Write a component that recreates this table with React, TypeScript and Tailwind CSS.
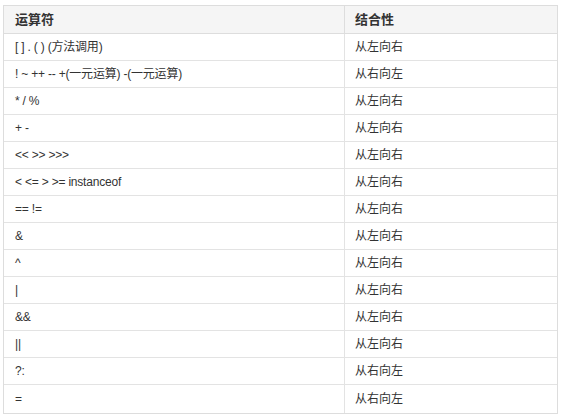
import React from "react";

const rows: [string, string][] = [
  ["[ ] . ( ) (方法调用)", "从左向右"],
  ["! ~ ++ -- +(一元运算) -(一元运算)", "从右向左"],
  ["* / %", "从左向右"],
  ["+ -", "从左向右"],
  ["<< >> >>>", "从左向右"],
  ["< <= > >= instanceof", "从左向右"],
  ["== !=", "从左向右"],
  ["&", "从左向右"],
  ["^", "从左向右"],
  ["|", "从左向右"],
  ["&&", "从左向右"],
  ["||", "从左向右"],
  ["?:", "从右向左"],
  ["=", "从右向左"],
];

export default function App() {
  return (
    <div className="w-[563px] h-[419px] bg-white pt-[5px] pl-[3px] text-[12px] text-[#333] font-['Liberation_Sans','Noto_Sans_CJK_SC',sans-serif]">
      <div className="w-[555px] border border-[#dddddd]">
        <div className="flex h-[28px] bg-[#f5f5f5] border-b border-[#dddddd] font-bold text-[13px]">
          <div className="w-[341px] border-r border-[#dddddd] pl-[11px] flex items-center">运算符</div>
          <div className="flex-1 pl-[10px] flex items-center">结合性</div>
        </div>
        {rows.map(([op, assoc], i) => (
          <div
            key={i}
            className={
              i === rows.length - 1
                ? "flex h-[28px]"
                : "flex h-[27px] border-b border-[#e3e3e3]"
            }
          >
            <div className="w-[341px] border-r border-[#e3e3e3] pl-[11px] flex items-center whitespace-pre tracking-[-0.2px]">
              {op}
            </div>
            <div className="flex-1 pl-[10px] flex items-center">{assoc}</div>
          </div>
        ))}
      </div>
    </div>
  );
}
